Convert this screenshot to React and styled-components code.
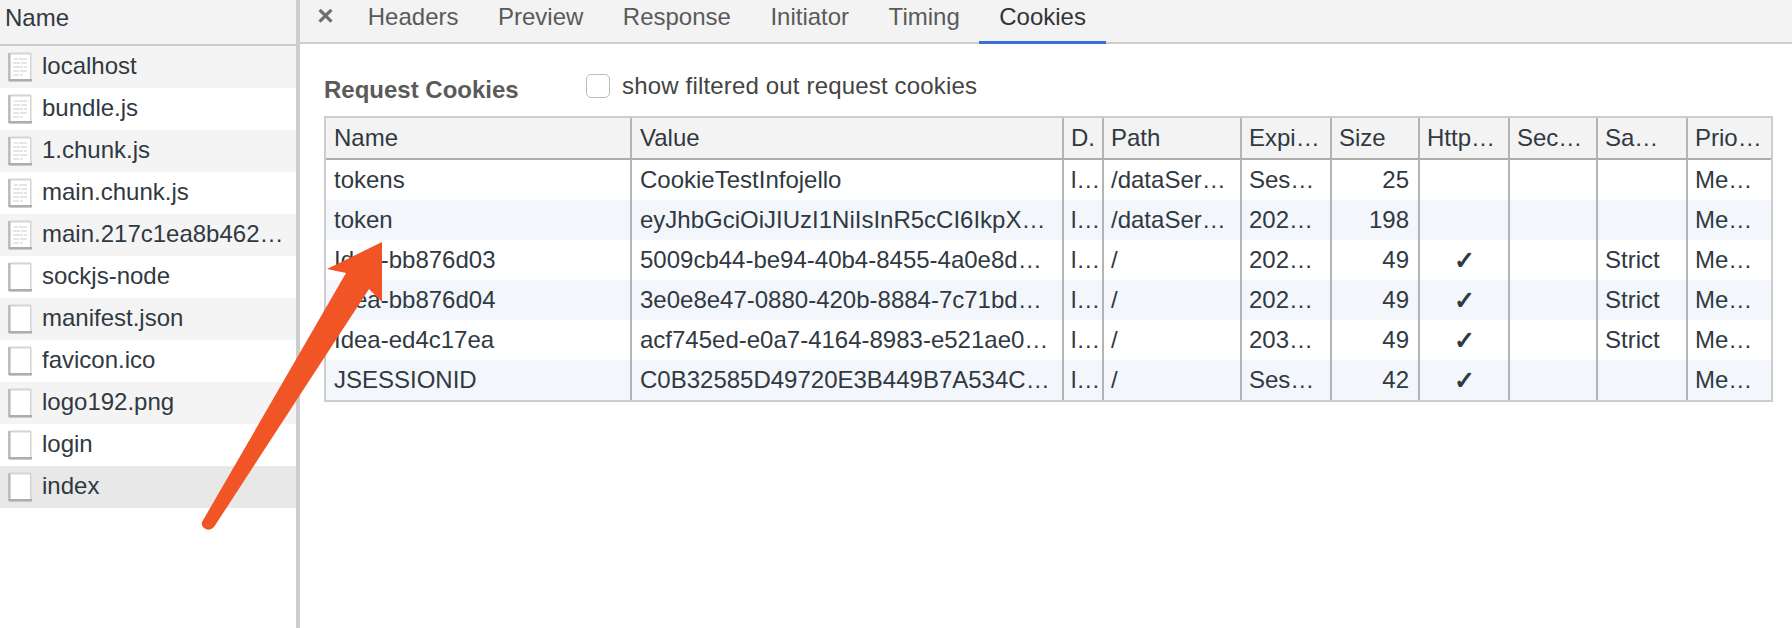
import React from "react";
import styled, { createGlobalStyle } from "styled-components";

const requests = [
  { name: "localhost", lines: true },
  { name: "bundle.js", lines: true },
  { name: "1.chunk.js", lines: true },
  { name: "main.chunk.js", lines: true },
  { name: "main.217c1ea8b462…", lines: true },
  { name: "sockjs-node" },
  { name: "manifest.json" },
  { name: "favicon.ico" },
  { name: "logo192.png" },
  { name: "login" },
  { name: "index", selected: true },
];

const tabs = ["Headers", "Preview", "Response", "Initiator", "Timing", "Cookies"];

const columns = [
  { label: "Name", width: 306 },
  { label: "Value", width: 432 },
  { label: "D.", width: 40 },
  { label: "Path", width: 138 },
  { label: "Expi…", width: 90 },
  { label: "Size", width: 88 },
  { label: "Http…", width: 90 },
  { label: "Sec…", width: 88 },
  { label: "Sa…", width: 90 },
  { label: "Prio…", width: 83 },
];

const cookies = [
  ["tokens", "CookieTestInfojello", "l…", "/dataSer…", "Ses…", "25", "", "", "", "Me…"],
  ["token", "eyJhbGciOiJIUzI1NiIsInR5cCI6IkpX…", "l…", "/dataSer…", "202…", "198", "", "", "", "Me…"],
  ["Idea-bb876d03", "5009cb44-be94-40b4-8455-4a0e8d…", "l…", "/", "202…", "49", "✓", "", "Strict", "Me…"],
  ["Idea-bb876d04", "3e0e8e47-0880-420b-8884-7c71bd…", "l…", "/", "202…", "49", "✓", "", "Strict", "Me…"],
  ["Idea-ed4c17ea", "acf745ed-e0a7-4164-8983-e521ae0…", "l…", "/", "203…", "49", "✓", "", "Strict", "Me…"],
  ["JSESSIONID", "C0B32585D49720E3B449B7A534C…", "l…", "/", "Ses…", "42", "✓", "", "", "Me…"],
];

const FileIcon = ({ lines }) => (
  <IconSvg viewBox="0 0 24 30" width="24" height="30">
    <rect x="0.5" y="0.5" width="23" height="29" rx="1.5" fill="#d4d4d4" />
    <rect x="0" y="1" width="2" height="28" fill="#bdbdbd" />
    <rect x="1" y="27" width="23" height="2.5" fill="#adadad" />
    <rect x="3" y="2.5" width="19" height="24.5" fill="#fff" />
    {lines && (
      <g fill="#e6e6e6">
        <rect x="6" y="6" width="4" height="2" />
        <rect x="11" y="6" width="8" height="2" />
        <rect x="5" y="10" width="7" height="2" />
        <rect x="13" y="10" width="6" height="2" />
        <rect x="5" y="14" width="10" height="2" />
        <rect x="16" y="14" width="3" height="2" />
        <rect x="5" y="18" width="6" height="2" />
        <rect x="12" y="18" width="7" height="2" />
        <rect x="5" y="22" width="6" height="2" />
        <rect x="12" y="22" width="3" height="2" />
      </g>
    )}
  </IconSvg>
);

const App = () => {
  return (
    <Page>
      <GlobalStyle />
      <Sidebar>
        <SidebarHeader>Name</SidebarHeader>
        {requests.map((req) => (
          <RequestRow key={req.name} $selected={req.selected}>
            <FileIcon lines={req.lines} />
            <RequestName>{req.name}</RequestName>
          </RequestRow>
        ))}
      </Sidebar>
      <Main>
        <TabBar>
          <CloseBtn>×</CloseBtn>
          {tabs.map((tab) => (
            <Tab key={tab} $active={tab === "Cookies"}>
              {tab}
            </Tab>
          ))}
        </TabBar>
        <Content>
          <SectionHead>
            <SectionTitle>Request Cookies</SectionTitle>
            <FilterLabel>
              <FilterBox />
              show filtered out request cookies
            </FilterLabel>
          </SectionHead>
          <TableWrap>
            <CookieTable>
              <colgroup>
                {columns.map((col) => (
                  <col key={col.label} width={col.width} />
                ))}
              </colgroup>
              <thead>
                <tr>
                  {columns.map((col) => (
                    <HeadCell key={col.label}>{col.label}</HeadCell>
                  ))}
                </tr>
              </thead>
              <tbody>
                {cookies.map((row) => (
                  <CookieRow key={row[0]}>
                    {row.map((value, i) => (
                      <Cell key={i} $align={i === 5 ? "right" : i === 6 ? "center" : "left"}>
                        {value}
                      </Cell>
                    ))}
                  </CookieRow>
                ))}
              </tbody>
            </CookieTable>
          </TableWrap>
        </Content>
      </Main>
      <Arrow viewBox="0 0 1792 628" width="1792" height="628">
        <path
          d="M382 242 L327 269 L346 273 L202 522 Q201 526 204 528 Q209 532 214 527 L369 289 L382 302 Z"
          fill="#f15526"
        />
      </Arrow>
    </Page>
  );
};

export default App;

const GlobalStyle = createGlobalStyle`
  html, body {
    margin: 0;
    height: 100%;
    background: #fff;
    overflow: hidden;
  }
  body {
    font-family: "Liberation Sans", Arial, sans-serif;
    font-size: 24px;
    color: #303942;
  }
`;

const Page = styled.div`
  position: relative;
  display: flex;
  width: 1792px;
  height: 628px;
  overflow: hidden;
`;

const Sidebar = styled.div`
  flex: none;
  width: 296px;
  border-right: 4px solid #cdcdcd;
`;

const SidebarHeader = styled.div`
  display: flex;
  align-items: center;
  box-sizing: border-box;
  height: 46px;
  padding: 0 0 8px 5px;
  background: #f3f3f3;
  border-bottom: 2px solid #cdcdcd;
`;

const RequestRow = styled.div`
  display: flex;
  align-items: center;
  gap: 10px;
  height: 42px;
  padding-left: 8px;
  background: ${(props) => (props.$selected ? "#e8e8e8" : "#fff")};

  &:nth-child(even) {
    background: ${(props) => (props.$selected ? "#e8e8e8" : "#f4f4f4")};
  }
`;

const IconSvg = styled.svg`
  flex: none;
`;

const RequestName = styled.span`
  padding-bottom: 2px;
  white-space: nowrap;
`;

const Main = styled.div`
  flex: 1;
  min-width: 0;
`;

const TabBar = styled.div`
  display: flex;
  height: 42px;
  background: #f3f3f3;
  border-bottom: 2px solid #cdcdcd;
`;

const CloseBtn = styled.div`
  display: flex;
  align-items: center;
  justify-content: center;
  width: 48px;
  padding: 0 0 10px 3px;
  box-sizing: border-box;
  font-size: 28px;
  font-weight: bold;
  color: #6e6e6e;
`;

const Tab = styled.div`
  display: flex;
  align-items: center;
  height: 44px;
  box-sizing: border-box;
  padding: 0 19.75px 8px;
  color: ${(props) => (props.$active ? "#333" : "#5a5a5a")};
  border-bottom: 3px solid ${(props) => (props.$active ? "#3b6fd8" : "transparent")};
`;

const Content = styled.div`
  padding: 0 19px 0 24px;
`;

const SectionHead = styled.div`
  display: flex;
  height: 72px;
`;

const SectionTitle = styled.div`
  width: 262px;
  padding-top: 32px;
  font-weight: bold;
  color: #5a5a5a;
`;

const FilterLabel = styled.label`
  display: flex;
  align-items: center;
  gap: 12px;
  height: 24px;
  margin-top: 30px;
  color: #444;
  letter-spacing: 0.17px;
  white-space: nowrap;
`;

const FilterBox = styled.span`
  display: block;
  width: 24px;
  height: 24px;
  box-sizing: border-box;
  background: #fff;
  border: 1.5px solid #bdbdbd;
  border-radius: 5px;
`;

const TableWrap = styled.div`
  width: 1449px;
  box-sizing: border-box;
  border: 2px solid #cdcdcd;
`;

const CookieTable = styled.table`
  width: 1445px;
  table-layout: fixed;
  border-collapse: separate;
  border-spacing: 0;
`;

const HeadCell = styled.th`
  height: 40px;
  padding: 0 7px;
  box-sizing: content-box;
  background: #f3f3f3;
  border-bottom: 2px solid #adadad;
  border-right: 2px solid #b4b4b4;
  font-size: 24px;
  font-weight: normal;
  text-align: left;
  white-space: nowrap;
  overflow: hidden;

  &:nth-child(-n + 2) {
    padding-left: 8px;
  }

  &:last-child {
    border-right: none;
  }
`;

const CookieRow = styled.tr`
  &:nth-child(even) td {
    background: #f3f6fb;
  }
`;

const Cell = styled.td`
  height: 40px;
  padding: 0 ${(props) => (props.$align === "right" ? "9px" : "7px")} 0 7px;
  background: #fff;
  border-right: 2px solid #b4b4b4;
  font-size: 24px;
  text-align: ${(props) => props.$align};
  white-space: nowrap;
  overflow: hidden;

  &:nth-child(-n + 2) {
    padding-left: 8px;
  }

  &:nth-child(7) {
    font-weight: bold;
    font-size: 25px;
  }

  &:last-child {
    border-right: none;
  }
`;

const Arrow = styled.svg`
  position: absolute;
  left: 0;
  top: 0;
  pointer-events: none;
`;
